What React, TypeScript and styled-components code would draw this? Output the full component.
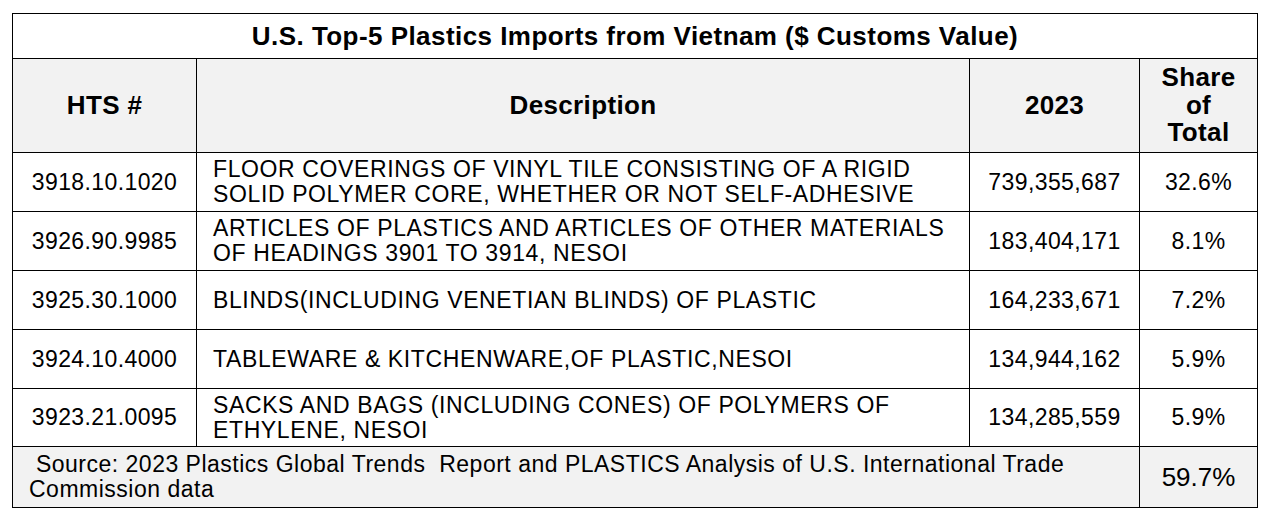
import React from "react";
import styled, { createGlobalStyle } from "styled-components";

const GlobalStyle = createGlobalStyle`
  html, body {
    margin: 0;
    padding: 0;
    background: #ffffff;
  }
  body {
    font-family: "Liberation Sans", Arial, sans-serif;
    color: #000000;
  }
`;

const Page = styled.div`
  padding: 13px 0 0 12px;
`;

const Table = styled.table`
  border-collapse: collapse;
  table-layout: fixed;
  width: 1246px;
  font-family: "Liberation Sans", Arial, sans-serif;
  color: #000;
`;

const Row = styled.tr<{ $h: number }>`
  height: ${(p) => p.$h}px;
`;

const TitleCell = styled.th`
  border: 1px solid #000;
  background: #ffffff;
  font-size: 26px;
  letter-spacing: 0.45px;
  font-weight: bold;
  text-align: center;
  vertical-align: middle;
  padding: 0;
  line-height: 30px;
`;

const HeadCell = styled.th`
  border: 1px solid #000;
  background: #f2f2f2;
  font-size: 26px;
  letter-spacing: 0.35px;
  font-weight: bold;
  text-align: center;
  vertical-align: middle;
  line-height: 27.5px;
  padding: 0 4px;
`;

const Cell = styled.td<{ $align?: "left" | "center" }>`
  border: 1px solid #000;
  background: #ffffff;
  font-size: 23px;
  letter-spacing: ${(p) => (p.$align === "left" ? "0.62px" : "0.4px")};
  text-align: ${(p) => p.$align ?? "center"};
  vertical-align: middle;
  padding: ${(p) => (p.$align === "left" ? "0 8px 0 16px" : "0")};
  line-height: 25px;
`;

const FootCell = styled.td<{ $big?: boolean }>`
  border: 1px solid #000;
  background: #f2f2f2;
  font-size: ${(p) => (p.$big ? "26px" : "23px")};
  letter-spacing: ${(p) => (p.$big ? "0" : "0.5px")};
  text-align: ${(p) => (p.$big ? "center" : "left")};
  vertical-align: middle;
  padding: ${(p) => (p.$big ? "0" : "0 8px 0 16px")};
  line-height: 25px;
  white-space: pre-wrap;
`;

const rows = [
  {
    hts: "3918.10.1020",
    desc: "FLOOR COVERINGS OF VINYL TILE CONSISTING OF A RIGID SOLID POLYMER CORE, WHETHER OR NOT SELF-ADHESIVE",
    value: "739,355,687",
    share: "32.6%",
    h: 59,
  },
  {
    hts: "3926.90.9985",
    desc: "ARTICLES OF PLASTICS AND ARTICLES OF OTHER MATERIALS OF HEADINGS 3901 TO 3914, NESOI",
    value: "183,404,171",
    share: "8.1%",
    h: 59,
  },
  {
    hts: "3925.30.1000",
    desc: "BLINDS(INCLUDING VENETIAN BLINDS) OF PLASTIC",
    value: "164,233,671",
    share: "7.2%",
    h: 59,
  },
  {
    hts: "3924.10.4000",
    desc: "TABLEWARE & KITCHENWARE,OF PLASTIC,NESOI",
    value: "134,944,162",
    share: "5.9%",
    h: 59,
  },
  {
    hts: "3923.21.0095",
    desc: "SACKS AND BAGS (INCLUDING CONES) OF POLYMERS OF ETHYLENE, NESOI",
    value: "134,285,559",
    share: "5.9%",
    h: 58,
  },
];

export default function App() {
  return (
    <>
      <GlobalStyle />
      <Page>
        <Table>
          <colgroup>
            <col style={{ width: 184 }} />
            <col style={{ width: 773 }} />
            <col style={{ width: 170 }} />
            <col style={{ width: 118 }} />
          </colgroup>
          <thead>
            <Row $h={45}>
              <TitleCell colSpan={4}>
                U.S. Top-5 Plastics Imports from Vietnam ($ Customs Value)
              </TitleCell>
            </Row>
            <Row $h={94}>
              <HeadCell>HTS #</HeadCell>
              <HeadCell>Description</HeadCell>
              <HeadCell>2023</HeadCell>
              <HeadCell>
                Share
                <br />
                of
                <br />
                Total
              </HeadCell>
            </Row>
          </thead>
          <tbody>
            {rows.map((r) => (
              <Row $h={r.h} key={r.hts}>
                <Cell>{r.hts}</Cell>
                <Cell $align="left">{r.desc}</Cell>
                <Cell>{r.value}</Cell>
                <Cell>{r.share}</Cell>
              </Row>
            ))}
            <Row $h={61}>
              <FootCell colSpan={3}>
                {" Source: 2023 Plastics Global Trends  Report and PLASTICS Analysis of U.S. International Trade Commission data"}
              </FootCell>
              <FootCell $big>59.7%</FootCell>
            </Row>
          </tbody>
        </Table>
      </Page>
    </>
  );
}
